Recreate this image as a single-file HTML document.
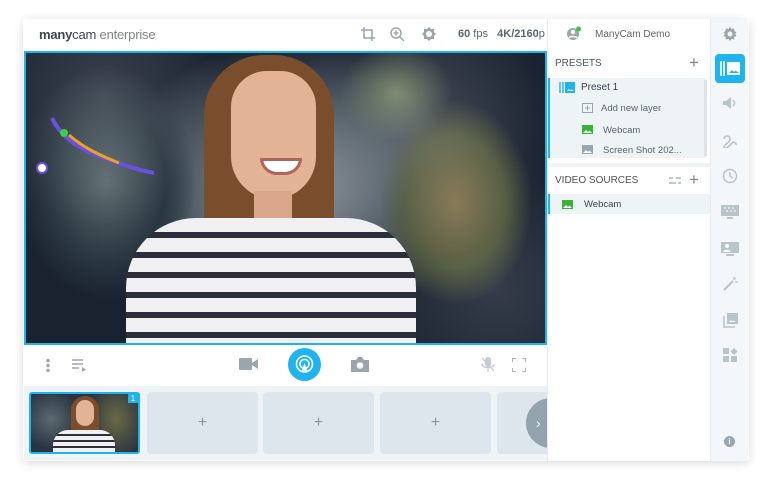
<!DOCTYPE html>
<html><head><meta charset="utf-8"><style>
*{box-sizing:border-box;margin:0;padding:0}
body{width:768px;height:495px;background:#fff;font-family:"Liberation Sans",sans-serif;position:relative;overflow:hidden}
.abs{position:absolute}
.win{left:23px;top:19px;width:726px;height:442px;background:#fff;box-shadow:0 2px 10px rgba(0,0,0,.15);border-radius:3px}
.t{color:#5a6570;font-size:11px}
</style></head><body>
<div class="abs win"></div>
<!-- top bar -->
<div class="abs" style="left:39px;top:27px;font-size:13px;color:#3b4650;letter-spacing:-.2px"><b style="font-weight:700">many</b>cam <span style="color:#7a858d">enterprise</span></div>
<svg class="abs" style="left:360px;top:26px" width="16" height="16" viewBox="0 0 16 16"><path d="M4 1v11h11M1 4h11v11" stroke="#9aa6ae" stroke-width="1.6" fill="none"/></svg>
<svg class="abs" style="left:389px;top:26px" width="16" height="16" viewBox="0 0 16 16"><circle cx="7" cy="7" r="5" stroke="#9aa6ae" stroke-width="1.5" fill="none"/><path d="M11 11l4 4M7 4.5v5M4.5 7h5" stroke="#9aa6ae" stroke-width="1.5"/></svg>
<svg class="abs" style="left:421px;top:26px" width="16" height="16" viewBox="0 0 16 16"><path d="M8 1l2 2h3v3l2 2-2 2v3h-3l-2 2-2-2H3v-3L1 8l2-2V3h3z" fill="#9aa6ae"/><circle cx="8" cy="8" r="3" fill="#fff"/></svg>
<div class="abs" style="left:458px;top:28px;font-size:11px;color:#5a6570"><b>60</b> fps&nbsp;&nbsp;&nbsp;<b>4K/2160</b>p</div>
<div class="abs" style="left:547px;top:19px;width:1px;height:32px;background:#e6ecef"></div>
<svg class="abs" style="left:566px;top:26px" width="16" height="16" viewBox="0 0 16 16"><circle cx="7" cy="8" r="6" fill="#9aa6ae"/><circle cx="7" cy="6" r="2.2" fill="#fff"/><path d="M3 12c1-2 7-2 8 0" stroke="#fff" stroke-width="1.6" fill="none"/><circle cx="12.5" cy="3" r="2.5" fill="#3fc23f"/></svg>
<div class="abs t" style="left:595px;top:29px;font-size:10px">ManyCam Demo</div>
<div class="abs" style="left:710px;top:19px;width:38px;height:442px;background:#f3f7fa;border-left:1px solid #e6ecef"></div>
<svg class="abs" style="left:722px;top:26px" width="16" height="16" viewBox="0 0 16 16"><path d="M8 1l1.5 2 2.5-.5.5 2.5 2 1.5-1.5 1.5 1.5 1.5-2 1.5-.5 2.5-2.5-.5L8 15l-1.5-2-2.5.5-.5-2.5-2-1.5L3 8 1.5 6.5l2-1.5.5-2.5 2.5.5z" fill="#9aa6ae"/><circle cx="8" cy="8" r="2.5" fill="#f3f7fa"/></svg>
<!-- video -->
<div class="abs" style="left:24px;top:51px;width:523px;height:294px;border:2px solid #1fb3ef;overflow:hidden;background:#1a2230">
 <div class="abs" style="left:0;top:0;width:523px;height:294px;background:radial-gradient(ellipse 90px 120px at 430px 150px,#7a6a44,#4a5236 55%,transparent 85%),radial-gradient(ellipse 70px 60px at 370px 40px,#6a7a5a,transparent 80%),radial-gradient(ellipse 100px 130px at 80px 130px,#5a6a6e,#2a3640 60%,transparent 90%),radial-gradient(ellipse 180px 150px at 260px 140px,#9aa0a8,#4a5660 60%,#1a2230 100%)"></div>
 <div class="abs" style="left:0;top:0;width:523px;height:294px;background:radial-gradient(circle at 75% 25%,rgba(255,255,255,.2),transparent 30%),radial-gradient(circle at 15% 15%,rgba(255,255,255,.15),transparent 25%),radial-gradient(circle at 90% 80%,rgba(255,255,255,.12),transparent 25%)"></div>
 <svg class="abs" style="left:8px;top:60px" width="140" height="70"><path d="M18 5 C25 20 40 35 70 45 C90 52 100 56 120 60" stroke="#6a4fe0" stroke-width="4" fill="none"/><path d="M35 22 C50 35 65 42 85 50" stroke="#f0a020" stroke-width="3" fill="none"/><circle cx="30" cy="20" r="4" fill="#3ad040"/><circle cx="8" cy="55" r="5" fill="#fff" stroke="#6a4fe0" stroke-width="2"/></svg>
 <!-- person -->
 <div class="abs" style="left:178px;top:2px;width:130px;height:200px;background:#7a4e2c;border-radius:60px 60px 20px 20px"></div>
 <div class="abs" style="left:205px;top:18px;width:85px;height:128px;background:#e2b394;border-radius:42px 42px 50px 50px"></div>
 <div class="abs" style="left:234px;top:105px;width:42px;height:17px;background:#fff;border-radius:0 0 20px 20px;border:3px solid #b0655a"></div>
 <div class="abs" style="left:228px;top:138px;width:38px;height:40px;background:#d9a88a"></div>
 <div class="abs" style="left:100px;top:165px;width:290px;height:140px;border-radius:70px 70px 0 0;background:repeating-linear-gradient(180deg,#f0f0f2 0 14px,#2c2f3a 14px 20px)"></div>
</div>
<!-- controls -->
<div class="abs" style="left:46px;top:358px;width:4px;height:14px;background:radial-gradient(circle,#9aa6ae 1.5px,transparent 2px) 0 0/4px 5px"></div>
<svg class="abs" style="left:72px;top:358px" width="16" height="14"><path d="M0 2h11M0 6h11M0 10h7" stroke="#9aa6ae" stroke-width="1.5"/><path d="M10 9l4 2.5-4 2.5z" fill="#9aa6ae"/></svg>
<svg class="abs" style="left:239px;top:357px" width="20" height="14"><rect x="0" y="1" width="13" height="12" rx="1.5" fill="#9aa6ae"/><path d="M13 6l6-4v10l-6-4z" fill="#9aa6ae"/></svg>
<div class="abs" style="left:288px;top:348px;width:33px;height:33px;border-radius:50%;background:#1fb3ef"></div>
<svg class="abs" style="left:292px;top:352px" width="25" height="25" viewBox="0 0 25 25"><circle cx="12.5" cy="12" r="8" stroke="#fff" stroke-width="1.6" fill="none"/><circle cx="12.5" cy="12" r="4.5" stroke="#fff" stroke-width="1.6" fill="none"/><path d="M12.5 11l-3 8h6z" fill="#fff"/></svg>
<svg class="abs" style="left:351px;top:357px" width="18" height="15"><path d="M0 3h5l2-3h4l2 3h5v12H0z" fill="#9aa6ae"/><circle cx="9" cy="8.5" r="3.3" fill="#fff"/></svg>
<svg class="abs" style="left:481px;top:357px" width="14" height="16"><rect x="4" y="0" width="6" height="10" rx="3" fill="#c5cdd2"/><path d="M1 7c0 5 12 5 12 0M7 12v3M1 1l12 13" stroke="#c5cdd2" stroke-width="1.4" fill="none"/></svg>
<svg class="abs" style="left:512px;top:358px" width="14" height="14"><path d="M0 4V0h4M10 0h4v4M14 10v4h-4M4 14H0v-4" stroke="#9aa6ae" stroke-width="1.6" fill="none"/></svg>
<!-- thumbnails -->
<div class="abs" style="left:24px;top:386px;width:523px;height:74px;background:#eef3f6;overflow:hidden">
 <div class="abs" style="left:5px;top:6px;width:111px;height:62px;border:2px solid #1fb3ef;border-radius:3px;overflow:hidden;background:radial-gradient(ellipse 30px 40px at 85px 25px,#6a6a44,transparent),radial-gradient(ellipse 30px 30px at 20px 25px,#5a6a70,transparent),#2a3440">
  <div class="abs" style="left:40px;top:2px;width:28px;height:40px;background:#7a4e2c;border-radius:14px 14px 4px 4px"></div>
  <div class="abs" style="left:45px;top:6px;width:18px;height:26px;background:#e2b394;border-radius:9px"></div>
  <div class="abs" style="left:22px;top:36px;width:62px;height:30px;border-radius:15px 15px 0 0;background:repeating-linear-gradient(180deg,#f0f0f2 0 4px,#2c2f3a 4px 6px)"></div>
  <div class="abs" style="right:0;top:0;width:10px;height:9px;background:#1fb3ef;color:#fff;font-size:8px;text-align:center;line-height:9px">1</div>
 </div>
 <div class="abs" style="left:123px;top:6px;width:111px;height:62px;background:#dde6ec;border-radius:4px;color:#8a969e;font-size:16px;text-align:center;line-height:62px">+</div>
 <div class="abs" style="left:239px;top:6px;width:111px;height:62px;background:#dde6ec;border-radius:4px;color:#8a969e;font-size:16px;text-align:center;line-height:62px">+</div>
 <div class="abs" style="left:356px;top:6px;width:111px;height:62px;background:#dde6ec;border-radius:4px;color:#8a969e;font-size:16px;text-align:center;line-height:62px">+</div>
 <div class="abs" style="left:473px;top:6px;width:60px;height:62px;background:#dde6ec;border-radius:4px"></div>
 <div class="abs" style="left:502px;top:12px;width:50px;height:50px;background:#93a3ad;border-radius:50%;color:#fff;font-size:14px;line-height:50px;padding-left:10px">›</div>
</div>
<!-- right panel -->
<div class="abs" style="left:547px;top:51px;width:163px;height:410px;border-left:1px solid #e6ecef"></div>
<div class="abs t" style="left:555px;top:58px;font-size:10px;color:#4a555e">PRESETS</div>
<div class="abs" style="left:689px;top:53px;font-size:17px;color:#7a858d">+</div>
<div class="abs" style="left:548px;top:78px;width:158px;height:80px;background:#eef3f6;border-left:2px solid #1fb3ef"></div>
<div class="abs" style="left:704px;top:80px;width:3px;height:76px;background:#dce3e8"></div>
<svg class="abs" style="left:559px;top:82px" width="16" height="11"><path d="M1 0v11M4 0v11" stroke="#1fb3ef" stroke-width="1.4"/><rect x="6" y="0" width="10" height="11" fill="#1fb3ef"/><path d="M8 9l2-2 1.5 1.5 1-1L15 9z" fill="#fff"/></svg>
<div class="abs t" style="left:581px;top:82px;font-size:10px;color:#3b4650">Preset 1</div>
<svg class="abs" style="left:582px;top:103px" width="11" height="10"><rect x=".5" y=".5" width="10" height="9" fill="none" stroke="#9aa6ae"/><path d="M5.5 2.5v5M3 5h5" stroke="#9aa6ae"/></svg>
<div class="abs t" style="left:601px;top:103px;font-size:9.5px">Add new layer</div>
<svg class="abs" style="left:582px;top:125px" width="11" height="9"><rect width="11" height="9" fill="#3ab23a"/><path d="M1 8l3-3 2 2 1.5-1.5L10 8z" fill="#fff"/></svg>
<div class="abs t" style="left:603px;top:125px;font-size:9.5px">Webcam</div>
<svg class="abs" style="left:582px;top:145px" width="11" height="9"><rect width="11" height="9" fill="#9aa6ae"/><path d="M1 8l3-3 2 2 1.5-1.5L10 8z" fill="#fff"/></svg>
<div class="abs t" style="left:603px;top:145px;font-size:9.5px">Screen Shot 202...</div>
<div class="abs" style="left:548px;top:163px;width:162px;height:4px;background:#eef3f6"></div>
<div class="abs t" style="left:555px;top:175px;font-size:10px;color:#4a555e">VIDEO SOURCES</div>
<svg class="abs" style="left:669px;top:176px" width="12" height="9"><path d="M0 2h4M7 2h5M0 7h7M9 7h3" stroke="#9aa6ae" stroke-width="1.2"/></svg>
<div class="abs" style="left:689px;top:170px;font-size:17px;color:#7a858d">+</div>
<div class="abs" style="left:548px;top:194px;width:162px;height:20px;background:#eef3f6;border-left:2px solid #1fb3ef"></div>
<svg class="abs" style="left:562px;top:200px" width="11" height="9"><rect width="11" height="9" fill="#3ab23a"/><path d="M1 8l3-3 2 2 1.5-1.5L10 8z" fill="#fff"/></svg>
<div class="abs t" style="left:584px;top:199px;font-size:9.5px;color:#3b4650">Webcam</div>
<!-- sidebar icons -->
<div class="abs" style="left:715px;top:54px;width:30px;height:29px;background:#1fb3ef;border-radius:4px"></div>
<svg class="abs" style="left:720px;top:61px" width="20" height="15"><path d="M1 0v15M4 0v15" stroke="#fff" stroke-width="1.6"/><rect x="7" y="1" width="13" height="13" fill="#fff"/><path d="M9 12l3-3 2 2 1.5-1.5L19 12z" fill="#1fb3ef"/></svg>
<svg class="abs" style="left:722px;top:96px" width="16" height="14"><path d="M1 5h3l5-4v12l-5-4H1z" fill="#b8c3ca"/><path d="M11 4c2 2 2 4 0 6" stroke="#b8c3ca" stroke-width="1.5" fill="none"/></svg>
<svg class="abs" style="left:722px;top:134px" width="16" height="14"><path d="M2 5c0-4 6-4 6 0s-6 5-6 8 5 0 7-3 5-2 5 1" stroke="#b8c3ca" stroke-width="1.6" fill="none"/></svg>
<svg class="abs" style="left:722px;top:168px" width="16" height="16"><circle cx="8" cy="8" r="6.5" stroke="#b8c3ca" stroke-width="1.5" fill="none"/><path d="M8 4v4l3 2" stroke="#b8c3ca" stroke-width="1.5" fill="none"/></svg>
<svg class="abs" style="left:721px;top:205px" width="18" height="14"><rect x="0" y="0" width="18" height="11" fill="#b8c3ca"/><path d="M3 3h2M7 3h2M11 3h2M5 6h2M9 6h2M13 6h2" stroke="#fff"/><path d="M6 13h6" stroke="#b8c3ca" stroke-width="2"/></svg>
<svg class="abs" style="left:721px;top:242px" width="18" height="14"><rect x="0" y="0" width="18" height="11" fill="#b8c3ca"/><circle cx="6" cy="4" r="2" fill="#fff"/><path d="M2 10c1-3 7-3 8 0" fill="#fff"/><path d="M5 13h8" stroke="#b8c3ca" stroke-width="2"/></svg>
<svg class="abs" style="left:723px;top:276px" width="15" height="15"><path d="M1 14L10 5" stroke="#b8c3ca" stroke-width="2"/><path d="M11 1v3M12 6h3M13 2l-1 1" stroke="#b8c3ca" stroke-width="1.3"/></svg>
<svg class="abs" style="left:723px;top:313px" width="15" height="15"><path d="M1 3v11h11" stroke="#b8c3ca" stroke-width="1.6" fill="none"/><rect x="4" y="0" width="11" height="11" fill="#b8c3ca"/><path d="M6 9l2-2 1.5 1.5 1-1L13 9z" fill="#fff"/></svg>
<svg class="abs" style="left:723px;top:348px" width="15" height="15"><rect x="0" y="0" width="6" height="6" fill="#b8c3ca"/><rect x="0" y="8" width="6" height="6" fill="#b8c3ca"/><rect x="8" y="8" width="6" height="6" fill="#b8c3ca"/><path d="M11 0l3.5 3.5-3.5 3.5-3.5-3.5z" fill="#b8c3ca"/></svg>
<div class="abs" style="left:724px;top:436px;width:11px;height:11px;border-radius:50%;background:#9aa6ae;color:#fff;font-size:8px;text-align:center;line-height:11px;font-weight:bold">i</div>
</body></html>
